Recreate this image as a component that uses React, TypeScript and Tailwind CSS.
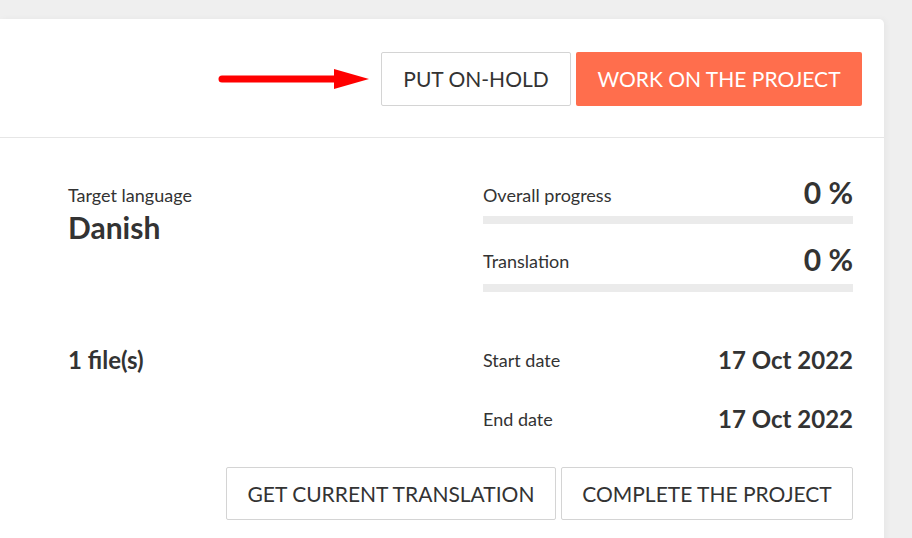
export default function App() {
  return (
    <div className="min-h-screen bg-[#efefef] pt-[19px] pr-[28px] font-['Lato','Noto_Sans',sans-serif] text-[#333]">
      <div className="bg-white rounded-r-[5px] shadow-[2px_0_6px_rgba(0,0,0,0.04)] h-[540px]">
        <div className="flex items-center justify-end gap-[5px] h-[119px] pt-[2px] pr-[22px] border-b border-[#e6e6e6]">
          <svg width="152" height="22" viewBox="0 0 152 22" className="mr-[6px]">
            <line x1="4" y1="11" x2="118" y2="11" stroke="#ff0000" strokeWidth="7" strokeLinecap="round" />
            <polygon points="116,1 151,11 116,21" fill="#ff0000" />
          </svg>
          <button className="h-[54px] w-[190px] border border-[#d4d4d4] rounded-[2px] bg-white text-[21px] text-[#333]">
            PUT ON-HOLD
          </button>
          <button className="h-[54px] w-[286px] rounded-[2px] bg-[#ff6e4d] text-[21px] text-white">
            WORK ON THE PROJECT
          </button>
        </div>
        <div className="pl-[68px] pr-[31px] pt-[37px]">
          <div className="flex">
            <div className="flex-1 pt-[9px]">
              <div className="text-[18px] leading-[22px]">Target language</div>
              <div className="text-[30px] leading-[34px] font-bold mt-[4px]">Danish</div>
            </div>
            <div className="w-[370px]">
              <div className="flex items-end justify-between h-[34px]">
                <span className="text-[18px] leading-[22px] mb-[3px]">Overall progress</span>
                <span className="text-[30px] leading-[34px] font-bold">0 %</span>
              </div>
              <div className="h-[8px] bg-[#ebebeb] mt-[7px]"></div>
              <div className="flex items-end justify-between h-[34px] mt-[18px]">
                <span className="text-[18px] leading-[22px] mb-[4px]">Translation</span>
                <span className="text-[30px] leading-[34px] font-bold">0 %</span>
              </div>
              <div className="h-[8px] bg-[#ebebeb] mt-[8px]"></div>
            </div>
          </div>
          <div className="flex mt-[54px]">
            <div className="flex-1 text-[24px] leading-[28px] font-bold">1 file(s)</div>
            <div className="w-[370px]">
              <div className="flex items-center justify-between h-[28px]">
                <span className="text-[18px] leading-[22px]">Start date</span>
                <span className="text-[24px] leading-[28px] font-bold">17 Oct 2022</span>
              </div>
              <div className="flex items-center justify-between h-[28px] mt-[31px]">
                <span className="text-[18px] leading-[22px]">End date</span>
                <span className="text-[24px] leading-[28px] font-bold">17 Oct 2022</span>
              </div>
            </div>
          </div>
          <div className="flex justify-end gap-[5px] mt-[34px]">
            <button className="h-[53px] w-[330px] border border-[#d4d4d4] rounded-[2px] bg-white text-[21px] text-[#333]">
              GET CURRENT TRANSLATION
            </button>
            <button className="h-[53px] w-[292px] border border-[#d4d4d4] rounded-[2px] bg-white text-[21px] text-[#333]">
              COMPLETE THE PROJECT
            </button>
          </div>
        </div>
      </div>
    </div>
  );
}
